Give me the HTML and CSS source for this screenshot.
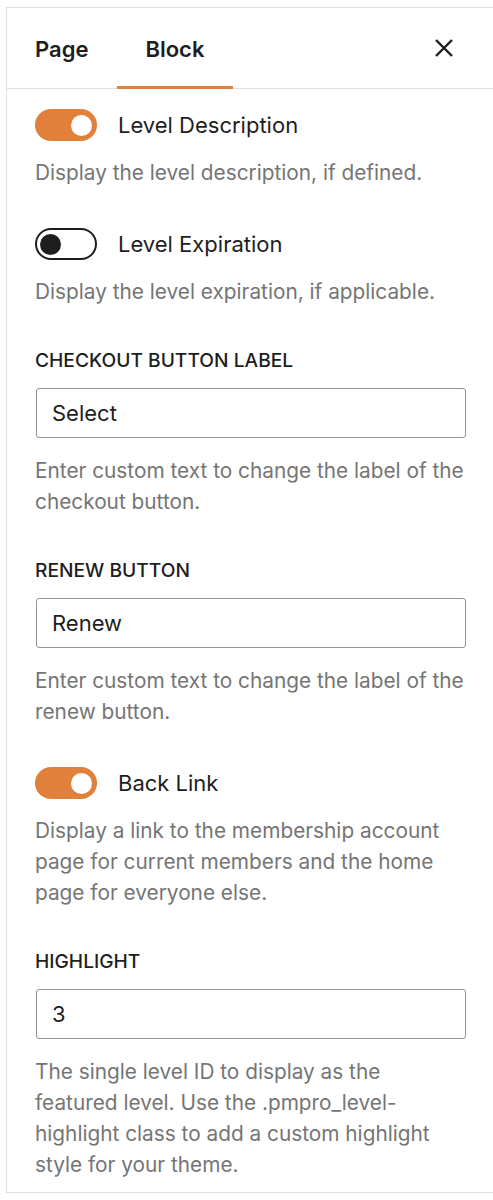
FILE: index.html
```html
<!DOCTYPE html>
<html lang="en">
<head>
<meta charset="utf-8">
<title>Block settings</title>
<link rel="stylesheet" href="styles.css">
</head>
<body>
<div class="panel">
  <div class="tabs">
    <div class="tab">Page</div>
    <div class="tab tab-active">Block</div>
    <div class="tabs-spacer"></div>
    <button class="close" aria-label="Close">
      <svg width="24" height="24" viewBox="0 0 24 24"><path d="M4 4 L20 20 M20 4 L4 20" stroke="#1e1e1e" stroke-width="2.4" fill="none"/></svg>
    </button>
  </div>
  <div class="content">
    <div class="item">
      <div class="toggle-row">
        <span class="toggle toggle-on"><span class="knob"></span></span>
        <span class="toggle-label">Level Description</span>
      </div>
      <p class="help help-toggle">Display the level description, if defined.</p>
    </div>
    <div class="item">
      <div class="toggle-row">
        <span class="toggle toggle-off"><span class="knob"></span></span>
        <span class="toggle-label">Level Expiration</span>
      </div>
      <p class="help help-toggle">Display the level expiration, if applicable.</p>
    </div>
    <div class="item">
      <div class="field-label">Checkout Button Label</div>
      <div class="input">Select</div>
      <p class="help help-input">Enter custom text to change the label of the checkout button.</p>
    </div>
    <div class="item">
      <div class="field-label">Renew Button</div>
      <div class="input">Renew</div>
      <p class="help help-input">Enter custom text to change the label of the renew button.</p>
    </div>
    <div class="item">
      <div class="toggle-row">
        <span class="toggle toggle-on"><span class="knob"></span></span>
        <span class="toggle-label">Back Link</span>
      </div>
      <p class="help help-toggle">Display a link to the membership account page for current members and the home page for everyone else.</p>
    </div>
    <div class="item item-last">
      <div class="field-label">Highlight</div>
      <div class="input">3</div>
      <p class="help help-input">The single level ID to display as the featured level. Use the .pmpro_level-highlight class to add a custom highlight style for your theme.</p>
    </div>
  </div>
</div>
</body>
</html>
```
FILE: styles.css
```css
html, body {
  margin: 0;
  padding: 0;
  background: #fff;
}
body {
  font-family: Inter, "Noto Sans", "Liberation Sans", sans-serif;
  color: #1e1e1e;
  padding-top: 7px;
  padding-left: 6px;
}
.panel {
  border-top: 1px solid #e0e0e0;
  border-left: 1px solid #e0e0e0;
  border-bottom: 1px solid #e0e0e0;
  height: 1186px;
  box-sizing: border-box;
}
.tabs {
  display: flex;
  align-items: stretch;
  height: 81px;
  border-bottom: 1px solid #e0e0e0;
  box-sizing: border-box;
}
.tab {
  display: flex;
  align-items: center;
  padding: 0 29px 0 28px;
  font-size: 22px;
  font-weight: 600;
  box-sizing: border-box;
  border-bottom: 3px solid transparent;
  margin-bottom: -1px;
  padding-top: 3px;
}
.tab-active {
  border-bottom-color: #e0803a;
}
.tabs-spacer {
  flex: 1;
}
.close {
  border: 0;
  background: none;
  padding: 0;
  width: 40px;
  margin-right: 29px;
  display: flex;
  align-items: center;
  justify-content: center;
}
.content {
  padding: 20px 27px 0 28px;
}
.item {
  margin-bottom: 40px;
}
.item-last {
  margin-bottom: 0;
}
.toggle-row {
  display: flex;
  align-items: center;
  gap: 21px;
}
.toggle {
  width: 62px;
  height: 32px;
  border-radius: 16px;
  box-sizing: border-box;
  display: flex;
  align-items: center;
  padding: 0 5px;
}
.toggle-on {
  background: #e0803a;
  justify-content: flex-end;
}
.toggle-on .knob {
  background: #fff;
}
.toggle-off {
  border: 2px solid #1e1e1e;
  background: #fff;
  padding: 0 3px;
}
.toggle-off .knob {
  background: #1e1e1e;
}
.knob {
  width: 21px;
  height: 21px;
  border-radius: 50%;
}
.toggle-label {
  font-size: 22px;
  line-height: 32px;
}
.help {
  margin: 0;
  font-size: 20.8px;
  line-height: 31px;
  color: #757575;
}
.help-toggle {
  margin-top: 16px;
}
.help-input {
  margin-top: 17px;
}
.field-label {
  text-transform: uppercase;
  font-size: 19.2px;
  font-weight: 500;
  line-height: 26px;
  margin-bottom: 15px;
}
.input {
  height: 50px;
  box-sizing: border-box;
  border: 1px solid #949494;
  border-radius: 3px;
  padding: 0 15px;
  margin-left: 1px;
  display: flex;
  align-items: center;
  font-size: 22px;
}
```
